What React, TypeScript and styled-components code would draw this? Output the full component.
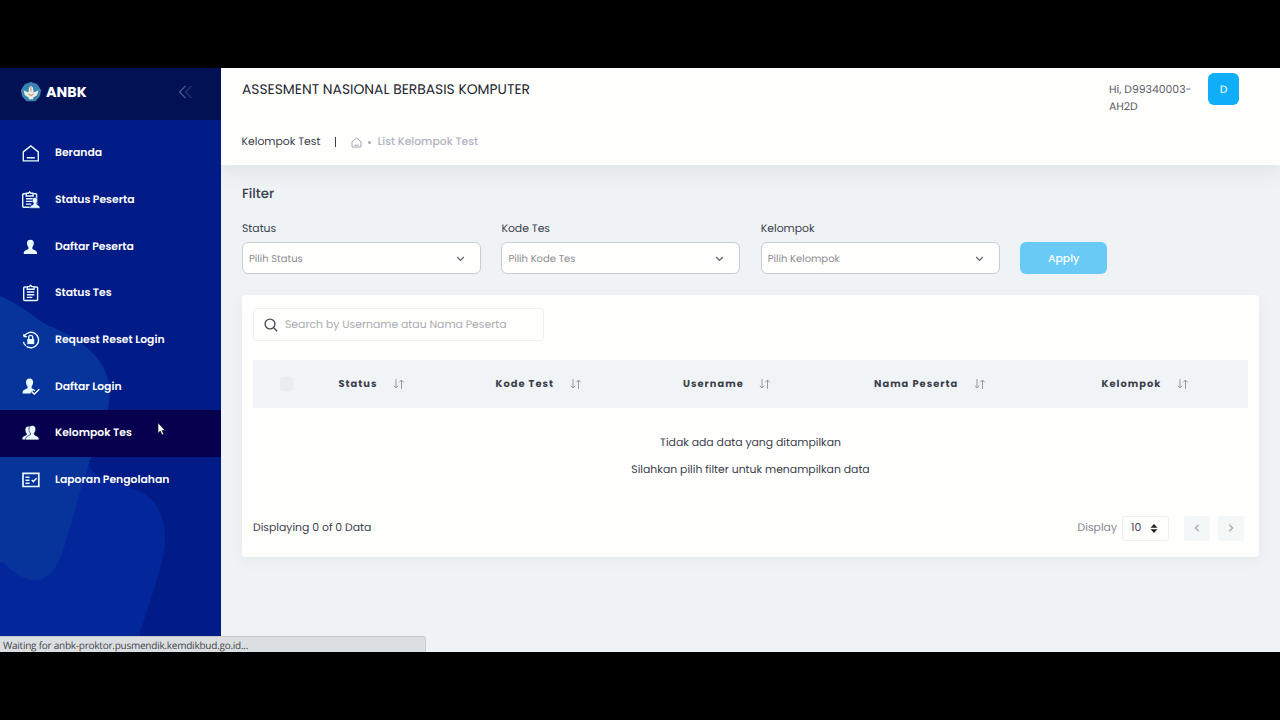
import React from "react";
import styled, { createGlobalStyle } from "styled-components";

const Global = createGlobalStyle`
  * { box-sizing: border-box; }
  body { margin: 0; background: #000; }
  button { font: inherit; border: 0; padding: 0; }
`;

const Screen = styled.div`
  width: 1280px;
  height: 720px;
  padding: 68px 0;
  background: #000;
  overflow: hidden;
  font-family: Poppins, Inter, sans-serif;
  text-rendering: geometricPrecision;
  color: #3b3f4c;
`;
const Page = styled.div`
  position: relative;
  display: flex;
  height: 584px;
  background: #eff3f6;
  overflow: hidden;
`;
const Label = styled.span<{ $size?: number; $track?: number; $weight?: number; $color?: string }>`
  font-size: ${(p) => p.$size ?? 10.85}px;
  letter-spacing: ${(p) => p.$track ?? 0}px;
  font-weight: ${(p) => p.$weight ?? 400};
  color: ${(p) => p.$color ?? "inherit"};
  white-space: nowrap;
`;

/* Sidebar */
const Sidebar = styled.aside`
  position: relative;
  width: 221px;
  flex: none;
  background: #011c86;
  color: #fff;
`;
const Waves = styled.svg`
  position: absolute;
  left: 0;
  top: 0;
`;
const Brand = styled.div`
  position: relative;
  display: flex;
  align-items: center;
  height: 52px;
  padding: 0 28px 4px 21px;
  background: #011153;
`;
const BrandName = styled.div`
  flex: 1;
  padding-left: 5px;
  line-height: 20px;
`;
const Menu = styled.nav`
  position: relative;
  padding-top: 10.3px;
`;
const MenuItem = styled.a<{ $active?: boolean }>`
  display: flex;
  align-items: center;
  gap: 14px;
  height: 46.67px;
  padding: 0 0 0.6px 21px;
  background: ${(p) => (p.$active ? "#07004f" : "transparent")};
`;

/* Main column */
const Main = styled.main`
  flex: 1;
  min-width: 0;
`;
const Header = styled.header`
  height: 97px;
  background: #fefefd;
  box-shadow: 0 6px 20px rgba(70, 75, 90, 0.1);
`;
const TopRow = styled.div`
  display: flex;
  height: 58px;
  padding: 5px 41px 0 21px;
`;
const Title = styled.div`
  flex: 1;
  line-height: 32px;
`;
const User = styled.div`
  width: 99px;
  padding-top: 9px;
  line-height: 16.5px;
  span { display: block; }
`;
const Avatar = styled.div`
  width: 31px;
  height: 32px;
  border-radius: 6px;
  background: #10aef8;
  color: #d9f4ff;
  text-align: center;
  line-height: 30px;
`;
const Crumbs = styled.div`
  display: flex;
  align-items: center;
  height: 32px;
  padding-left: 20.5px;
`;
const Divider = styled.i`
  width: 1px;
  height: 10px;
  margin: 0 15px;
  background: #3b3f4c;
`;
const Dot = styled.i`
  width: 3px;
  height: 3px;
  margin: 1px 6px 0 6px;
  border-radius: 50%;
  background: #a8a9bb;
`;
const Content = styled.div`
  padding: 18px 21px 0 21px;
`;
const FilterTitle = styled.div`
  height: 35px;
  line-height: 20px;
`;
const Filters = styled.div`
  display: flex;
  align-items: flex-end;
  gap: 20.4px;
  height: 56px;
`;
const Field = styled.div`
  width: 239px;
`;
const FieldLabel = styled.div`
  height: 24px;
  line-height: 18px;
`;
const SelectBox = styled.div`
  display: flex;
  align-items: center;
  justify-content: space-between;
  height: 32px;
  padding: 1px 15px 0 6px;
  border: 1px solid #c9ccd5;
  border-radius: 6px;
  background: #fefefd;
`;
const Apply = styled.button`
  width: 87px;
  height: 32px;
  padding-bottom: 3px;
  border-radius: 6px;
  background: #69caf6;
  color: #fff;
`;

/* Data card */
const Card = styled.section`
  height: 262px;
  margin-top: 21px;
  padding: 13px 11px 0;
  border-radius: 4px;
  background: #fefefd;
  box-shadow: 0 4px 14px rgba(80, 80, 110, 0.06);
`;
const Search = styled.div`
  display: flex;
  align-items: center;
  gap: 7px;
  width: 291px;
  height: 33px;
  padding-left: 10px;
  border: 1px solid #eff0f1;
  border-radius: 4px;
`;
const TableHead = styled.div`
  display: grid;
  grid-template-columns: 85.5px 157px 187.5px 191px 227.5px 1fr;
  align-items: center;
  height: 48px;
  margin-top: 19px;
  background: #f1f4f6;
`;
const HeadCell = styled.div`
  display: flex;
  align-items: center;
  padding-top: 1px;
`;
const SortIcon = styled.svg`
  margin: 0 0 1px 15.6px;
`;
const CheckBox = styled.i`
  width: 14px;
  height: 14px;
  margin: 0 0 1px 27px;
  border-radius: 4px;
  background: #eaecee;
`;
const Empty = styled.div`
  display: flex;
  flex-direction: column;
  align-items: center;
  height: 103px;
  padding-top: 21px;
  line-height: 27px;
`;
const Footer = styled.div`
  display: flex;
  align-items: center;
  height: 34px;
  padding-right: 4px;
`;
const Grow = styled.div`
  flex: 1;
`;
const PageSize = styled.div`
  display: flex;
  align-items: center;
  justify-content: space-between;
  width: 47px;
  height: 25px;
  margin: 0 15px 0 5px;
  padding: 0 10px 0 8px;
  border: 1px solid #eff0f2;
  border-radius: 3px;
`;
const PageButton = styled.button`
  display: flex;
  align-items: center;
  justify-content: center;
  width: 26px;
  height: 25px;
  margin-left: 8px;
  border-radius: 3px;
  background: #f3f7f8;
  &:first-of-type { margin-left: 0; }
`;

/* Browser overlays */
const LoadStatus = styled.div`
  position: absolute;
  left: 0;
  bottom: 0;
  width: 426px;
  height: 16px;
  padding: 2px 0 0 3px;
  border-top: 1px solid #c5c9cc;
  border-right: 1px solid #c9cdd0;
  border-radius: 0 3px 0 0;
  background: #dbdfe1;
  font-family: "Open Sans", "Noto Sans", sans-serif;
  line-height: 13px;
  span { display: block; }
`;
const Pointer = styled.svg`
  position: absolute;
  left: 157px;
  top: 354px;
`;

const bust = "M9 2.200c2.200 0 3.300 1.500 3.100 3.600-.1 1.600-.7 2.600-1.300 3.300v1.400c.5 1 4 1.300 4.300 3.600v1.300H2.900v-1.300c.3-2.300 3.800-2.600 4.300-3.600V9.100C6.500 8.400 6 7.400 5.900 5.800 5.700 3.700 6.800 2.200 9 2.200z";

const Clipboard = () => (
  <>
    <path d="M5 3H3.200c-.7 0-1 .3-1 1v11.500c0 .6.3 1 1 1h11.900c.7 0 1-.4 1-1V4c0-.7-.3-1-1-1H13.300" />
    <path d="M5.700 2.600v2.700h6.900V2.600h-2.200L9.200 1.200 7.900 2.600z" />
    <path d="M5.400 8h7.400M5.400 10.700h7.400M5.400 13.400h5.400" />
  </>
);

const icons: Record<string, React.ReactNode> = {
  home: <path d="M1.800 7.900 9.300 2l7.500 5.900v9H1.800zM5.300 13.700h8" />,
  clipboardUser: (
    <>
      <g transform="translate(-1 -.3)"><Clipboard /></g>
      <path transform="translate(6 4.600) scale(.82)" d={bust} fill="#e9fbff" stroke="#011c86" strokeWidth=".6" />
    </>
  ),
  user: <path transform="translate(-.9 -.7) scale(1.090)" d={bust} fill="currentColor" stroke="none" />,
  clipboard: <Clipboard />,
  lock: (
    <>
      <path d="M2.600 5.300A7.700 7.700 0 1 1 5 15.400M2.300 5.600V3.200M2.300 5.600h3.200M1.900 10.800c.4 1.600 1.300 2.900 2.400 3.900" />
      <path d="M5.800 8h6.900v5.100H5.800z" fill="currentColor" stroke="none" />
      <path d="M7.200 8V6.400a2 2 0 0 1 4 0V8" />
    </>
  ),
  userCheck: (
    <>
      <path transform="translate(-2.200 -2) scale(1.140)" d={bust} fill="currentColor" stroke="none" />
      <path d="m10.300 13.600 2.500 2.600 5-5" stroke="#02288f" strokeWidth="4" />
      <path d="m10.300 13.600 2.500 2.600 5-5" strokeWidth="1.600" />
    </>
  ),
  users: (
    <>
      <path transform="translate(-2 .2) scale(1)" d={bust} fill="currentColor" stroke="none" />
      <path transform="translate(.9 -1) scale(1.100)" d={bust} fill="currentColor" stroke="#07004f" strokeWidth=".6" />
    </>
  ),
  report: (
    <>
      <path d="M1.500 2.300h15.800v13.200H1.500z" strokeWidth="1.700" />
      <path d="M4 6.200h4M4 9.200h4M4 12.200h4M10.300 9l1.500 1.600 3.300-3.400" strokeWidth="1.500" />
    </>
  ),
};

const menu = [
  { icon: "home", text: "Beranda" },
  { icon: "clipboardUser", text: "Status Peserta" },
  { icon: "user", text: "Daftar Peserta" },
  { icon: "clipboard", text: "Status Tes" },
  { icon: "lock", text: "Request Reset Login" },
  { icon: "userCheck", text: "Daftar Login" },
  { icon: "users", text: "Kelompok Tes", active: true },
  { icon: "report", text: "Laporan Pengolahan" },
];

const filters = [
  { label: "Status", value: "Pilih Status" },
  { label: "Kode Tes", value: "Pilih Kode Tes" },
  { label: "Kelompok", value: "Pilih Kelompok" },
];

const columns = ["Status", "Kode Test", "Username", "Nama Peserta", "Kelompok"];

const Logo = () => (
  <svg width="20" height="20" viewBox="0 0 20 20">
    <path d="M10 .4 16 2.400 19.600 8 18.600 14 14.500 18.800H5.500L1.400 14 .4 8 4 2.400z" fill="#3583b5" stroke="#6aa0bd" strokeWidth=".6" />
    <path d="M2.500 8.300 7.300 10.500l.8-5L10 3.700l1.900 1.800.8 5 4.800-2.200-1.400 5L12.300 15.500v1.700H7.700v-1.700L3.900 13.300z" fill="#e8ece6" />
    <path d="M10 4.500v5M7.500 12l2.500 1.500 2.500-1.500" stroke="#c6a06c" strokeWidth="1.200" fill="none" />
  </svg>
);

export default function App() {
  return (
    <Screen>
      <Global />
      <Page>
        <Sidebar>
          <Waves width="221" height="584">
            <path d="M0 396H88C98 418 134 414 151 431C166 447 168 470 162 493C155 523 143 550 135 584H0z" fill="#03279b" />
            <path d="M0 228C20 236 31 247 47 257C75 268 98 284 106 305C113 322 109 342 101 363C86 400 78 432 65 476C59 497 51 511 36 512C25 512 17 506 10 501C7 496 3 495 0 494z" fill="#06349b" />
          </Waves>
          <Brand>
            <Logo />
            <BrandName><Label $size={14.3} $weight={700}>ANBK</Label></BrandName>
            <svg width="15" height="14" fill="none" strokeWidth="1.300">
              <path d="M7.500 1 1.500 7l6 6" stroke="#4b588e" />
              <path d="M13.500 1 7.500 7l6 6" stroke="#26356f" />
            </svg>
          </Brand>
          <Menu>
            {menu.map((m) => (
              <MenuItem key={m.text} $active={m.active}>
                <svg width="20" height="18" viewBox="0 0 19 18" fill="none" stroke="currentColor" strokeWidth="1.400" color="#e9fbff">
                  {icons[m.icon]}
                </svg>
                <Label $size={10.8} $weight={600}>{m.text}</Label>
              </MenuItem>
            ))}
          </Menu>
        </Sidebar>
        <Main>
          <Header>
            <TopRow>
              <Title><Label $size={13.87} $color="#23262f">ASSESMENT NASIONAL BERBASIS KOMPUTER</Label></Title>
              <User>
                <Label $color="#5c5f68">Hi, D99340003-<br />AH2D</Label>
              </User>
              <Avatar><Label $weight={500}>D</Label></Avatar>
            </TopRow>
            <Crumbs>
              <Label>Kelompok Test</Label>
              <Divider />
              <svg width="11" height="11" viewBox="0 0 11 11" fill="none" stroke="#a4a5b5">
                <path d="M1 4.700 5.500 1 10 4.700v5.300H1zM3.200 8.200h4.600" />
              </svg>
              <Dot />
              <Label $weight={500} $color="#b2b3c2">List Kelompok Test</Label>
            </Crumbs>
          </Header>
          <Content>
            <FilterTitle><Label $size={13.3} $weight={500}>Filter</Label></FilterTitle>
            <Filters>
              {filters.map((f) => (
                <Field key={f.label}>
                  <FieldLabel><Label>{f.label}</Label></FieldLabel>
                  <SelectBox>
                    <Label $size={10} $color="#8c8d92">{f.value}</Label>
                    <svg width="9" height="6" fill="none" stroke="#64666d" strokeWidth="1.300"><path d="m1.200 1 3.300 3.400L7.800 1" /></svg>
                  </SelectBox>
                </Field>
              ))}
              <Apply><Label $weight={500}>Apply</Label></Apply>
            </Filters>
            <Card>
              <Search>
                <svg width="14" height="14" fill="none" stroke="#4c4e53" strokeWidth="1.400">
                  <circle cx="6" cy="6" r="4.900" /><path d="m9.500 9.500 3.700 3.700" />
                </svg>
                <Label $color="#abacb0">Search by Username atau Nama Peserta</Label>
              </Search>
              <TableHead>
                <CheckBox />
                {columns.map((c) => (
                  <HeadCell key={c}>
                    <Label $size={9.85} $weight={700} $track={1.03}>{c}</Label>
                    <SortIcon width="12" height="10" fill="none" stroke="#96999f">
                      <path d="M3 0v9M.8 6.700 3 9l2.200-2.300M8.500 10V1M6.300 3.300 8.500 1l2.200 2.300" />
                    </SortIcon>
                  </HeadCell>
                ))}
              </TableHead>
              <Empty>
                <Label>Tidak ada data yang ditampilkan</Label>
                <Label>Silahkan pilih filter untuk menampilkan data</Label>
              </Empty>
              <Footer>
                <Label>Displaying 0 of 0 Data</Label>
                <Grow />
                <Label $color="#85878f">Display</Label>
                <PageSize>
                  <Label>10</Label>
                  <svg width="8" height="9" fill="#222"><path d="M4 0 7.500 3.700H.5zM4 9 .5 5.300h7z" /></svg>
                </PageSize>
                <PageButton><svg width="6" height="8" fill="none" stroke="#a4a7ae" strokeWidth="1.200"><path d="M4.800.8 1.300 4l3.500 3.200" /></svg></PageButton>
                <PageButton><svg width="6" height="8" fill="none" stroke="#a4a7ae" strokeWidth="1.200"><path d="M1.200.8 4.700 4 1.200 7.200" /></svg></PageButton>
              </Footer>
            </Card>
          </Content>
        </Main>
        <LoadStatus><Label $size={10} $track={-0.24} $color="#45484c">Waiting for anbk-proktor.pusmendik.kemdikbud.go.id...</Label></LoadStatus>
        <Pointer width="9" height="14" viewBox="0 0 9 14"><path d="M1 .8v10.400l2.300-2.100 1.700 3.800 1.700-.8L5 8.400h3z" fill="#fff" stroke="#111" strokeWidth=".6" /></Pointer>
      </Page>
    </Screen>
  );
}
